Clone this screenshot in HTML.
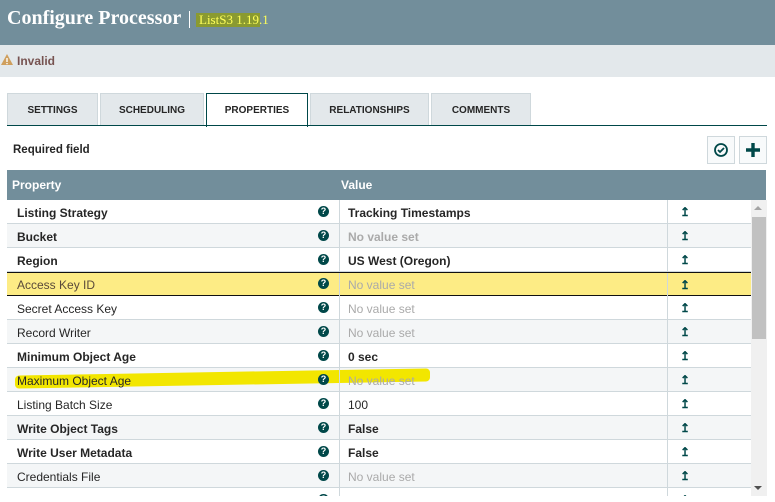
<!DOCTYPE html>
<html><head><style>
*{box-sizing:border-box;margin:0;padding:0}
body{width:775px;height:502px;overflow:hidden;background:#fff;font-family:"Liberation Sans",sans-serif;position:relative}
.hdr{position:absolute;left:0;top:0;width:775px;height:45px;background:#728e9b}
.title{position:absolute;left:7px;top:7px;font-family:"Liberation Serif",serif;font-weight:bold;font-size:20px;color:#fff}
.sep{position:absolute;left:189px;top:11px;width:1px;height:17px;background:#fff}
.ver{position:absolute;left:199px;top:11px;font-size:13px;color:#ffff5a;height:17px;line-height:17px;font-family:"Liberation Serif",serif}
.ban{position:absolute;left:0;top:45px;width:775px;height:32px;background:#e3e8eb}
.inv{position:absolute;left:17px;top:54px;font-size:12px;font-weight:bold;color:#775351}
.tab{position:absolute;top:93px;height:33px;background:#e3e8eb;border:1px solid #cfd8dc;border-bottom:none;font-size:10px;font-weight:bold;color:#262626;text-align:center;line-height:34px}
.tab.a{background:#fff;border:1px solid #004849;border-bottom:none;height:34px}
.line{position:absolute;left:7px;top:125px;width:760px;height:1px;background:#004849}
.req{position:absolute;left:13px;top:144px;font-size:11.5px;font-weight:bold;color:#262626}
.btn{position:absolute;top:136px;width:28px;height:28px;border:1px solid #cfd8dc;background:#f8fafb}
.th{position:absolute;left:7px;top:170px;width:759px;height:30px;background:#728e9b;color:#fff;font-weight:bold;font-size:12px}
.row{position:absolute;left:7px;width:744px;height:24px;border-bottom:1px solid #cfd8dc;font-size:12px;color:#262626}
.row span{position:absolute;top:6px}
.b{font-weight:bold}
.nv{color:#aaa}
.q{position:absolute;left:311px;top:6px;width:11px;height:11px;border-radius:50%;background:#004849;color:#fff;font-size:9px;font-weight:bold;text-align:center;line-height:11px}
.vl{position:absolute;left:332px;top:0;width:1px;height:24px;background:#cfd8dc}
.vl2{position:absolute;left:660px;top:0;width:1px;height:24px;background:#cfd8dc}
.ar{position:absolute;left:673px;top:5px;font-size:12px;font-weight:bold;color:#004849}
</style></head><body>
<div class="hdr"><div class="title">Configure Processor</div><div class="sep"></div><div style="position:absolute;left:196px;top:13px;width:64px;height:14px;background:#8a9a30"></div><div class="ver">ListS3 1.19.1</div></div>
<div class="ban"><svg style="position:absolute;left:0;top:8px" width="14" height="13"><path d="M7 1L13 12H1Z" fill="#cf9f5d"/><rect x="6.3" y="5" width="1.4" height="4" fill="#fff"/><rect x="6.3" y="10" width="1.4" height="1.2" fill="#fff"/></svg></div>
<div class="inv">Invalid</div>
<div class="tab" style="left:7px;width:91px">SETTINGS</div>
<div class="tab" style="left:100px;width:104px">SCHEDULING</div>
<div class="tab a" style="left:206px;width:102px">PROPERTIES</div>
<div class="tab" style="left:310px;width:119px">RELATIONSHIPS</div>
<div class="tab" style="left:431px;width:100px">COMMENTS</div>
<div class="line"></div>
<div class="req">Required field</div>
<div class="btn" style="left:707px"><svg width="26" height="26"><circle cx="13" cy="13" r="6" fill="none" stroke="#004849" stroke-width="1.8"/><path d="M10 13l2 2 4-4" fill="none" stroke="#004849" stroke-width="1.8"/></svg></div>
<div class="btn" style="left:739px"><svg width="26" height="26"><path d="M13 6v14M6 13h14" stroke="#004849" stroke-width="3.4"/></svg></div>
<div class="th"><span style="position:absolute;left:5px;top:8px">Property</span><span style="position:absolute;left:334px;top:8px">Value</span></div>
<div style="position:absolute;left:751px;top:200px;width:16px;height:296px;background:#f0f0f0"></div>
<div style="position:absolute;left:752px;top:217px;width:14px;height:122px;background:#c1c1c1"></div>
<div style="position:absolute;left:754px;top:206px;width:0;height:0;border:4px solid transparent;border-bottom:4px solid #a3a3a3;border-top:none"></div>
<div style="position:absolute;left:754px;top:486px;width:0;height:0;border:4px solid transparent;border-top:4px solid #505050;border-bottom:none"></div>
<div class="row" style="top:200px;background:#fff"><span class="b" style="left:10px">Listing Strategy</span><div class="q">?</div><div class="vl"></div><span class="b" style="left:341px">Tracking Timestamps</span><div class="vl2"></div><div class="ar">↥</div></div>
<div class="row" style="top:224px;background:#f4f6f7"><span class="b" style="left:10px">Bucket</span><div class="q">?</div><div class="vl"></div><span class="b nv" style="left:341px">No value set</span><div class="vl2"></div><div class="ar">↥</div></div>
<div class="row" style="top:248px;background:#fff"><span class="b" style="left:10px">Region</span><div class="q">?</div><div class="vl"></div><span class="b" style="left:341px">US West (Oregon)</span><div class="vl2"></div><div class="ar">↥</div></div>
<div class="row" style="top:272px;background:#fdec85;border-top:1px solid #111;border-bottom:1px solid #111"><span style="left:10px;top:5px;color:#5a4a3a">Access Key ID</span><div class="q" style="top:5px">?</div><div class="vl"></div><span class="nv" style="left:341px;top:5px">No value set</span><div class="vl2"></div><div class="ar">↥</div></div>
<div class="row" style="top:296px;background:#fff"><span style="left:10px">Secret Access Key</span><div class="q">?</div><div class="vl"></div><span class="nv" style="left:341px">No value set</span><div class="vl2"></div><div class="ar">↥</div></div>
<div class="row" style="top:320px;background:#f4f6f7"><span style="left:10px">Record Writer</span><div class="q">?</div><div class="vl"></div><span class="nv" style="left:341px">No value set</span><div class="vl2"></div><div class="ar">↥</div></div>
<div class="row" style="top:344px;background:#fff"><span class="b" style="left:10px">Minimum Object Age</span><div class="q">?</div><div class="vl"></div><span class="b" style="left:341px">0 sec</span><div class="vl2"></div><div class="ar">↥</div></div>
<div class="row" style="top:368px;background:#f4f6f7"><div style="position:absolute;left:8px;top:4px;width:415px;height:13px;background:#f2e600;transform:skewY(-1deg);border-radius:4px"></div><span style="left:10px">Maximum Object Age</span><div class="q">?</div><div class="vl"></div><span class="nv" style="left:341px">No value set</span><div class="vl2"></div><div class="ar">↥</div></div>
<div class="row" style="top:392px;background:#fff"><span style="left:10px">Listing Batch Size</span><div class="q">?</div><div class="vl"></div><span style="left:341px">100</span><div class="vl2"></div><div class="ar">↥</div></div>
<div class="row" style="top:416px;background:#f4f6f7"><span class="b" style="left:10px">Write Object Tags</span><div class="q">?</div><div class="vl"></div><span class="b" style="left:341px">False</span><div class="vl2"></div><div class="ar">↥</div></div>
<div class="row" style="top:440px;background:#fff"><span class="b" style="left:10px">Write User Metadata</span><div class="q">?</div><div class="vl"></div><span class="b" style="left:341px">False</span><div class="vl2"></div><div class="ar">↥</div></div>
<div class="row" style="top:464px;background:#f4f6f7"><span style="left:10px">Credentials File</span><div class="q">?</div><div class="vl"></div><span class="nv" style="left:341px">No value set</span><div class="vl2"></div><div class="ar">↥</div></div>
<div class="row" style="top:488px;background:#fff;height:8px;overflow:hidden;border:none"><span style="left:10px">AWS Credentials Provider Service</span><div class="q">?</div><div class="vl"></div><span class="nv" style="left:341px">No value set</span><div class="vl2"></div><div class="ar">↥</div></div>
</body></html>
